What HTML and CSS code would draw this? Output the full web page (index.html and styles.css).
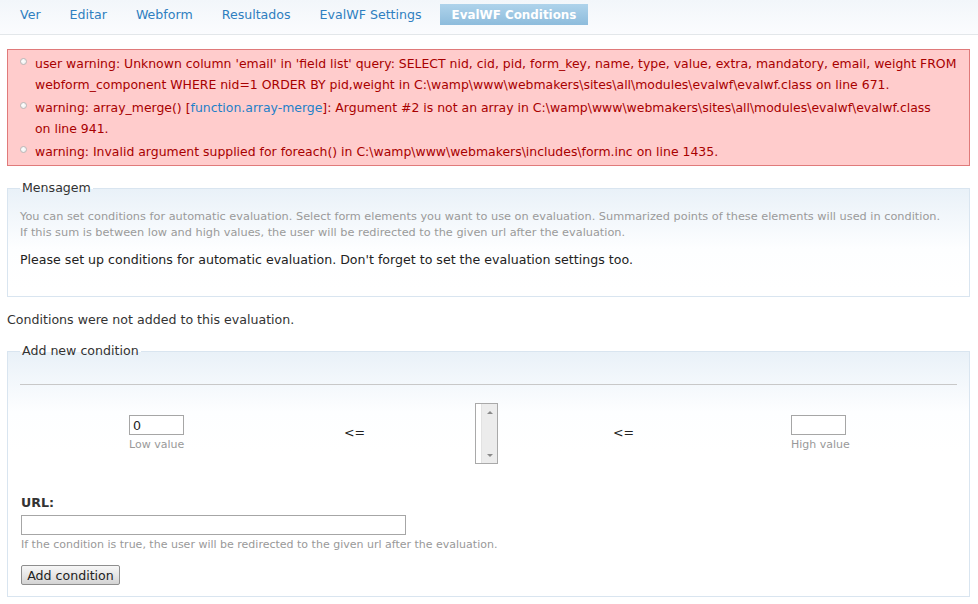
FILE: index.html
```html
<!DOCTYPE html>
<html>
<head>
<meta charset="utf-8">
<link rel="stylesheet" href="styles.css">
</head>
<body>
<div class="tabs">
  <a class="tab" href="#">Ver</a>
  <a class="tab" href="#">Editar</a>
  <a class="tab" href="#">Webform</a>
  <a class="tab" href="#">Resultados</a>
  <a class="tab" href="#">EvalWF Settings</a>
  <a class="tab active" href="#">EvalWF Conditions</a>
</div>
<div class="page">
  <div class="errors">
    <ul>
      <li>user warning: Unknown column 'email' in 'field list' query: SELECT nid, cid, pid, form_key, name, type, value, extra, mandatory, email, weight FROM webform_component WHERE nid=1 ORDER BY pid,weight in C:\wamp\www\webmakers\sites\all\modules\evalwf\evalwf.class on line 671.</li>
      <li>warning: array_merge() [<a href="#">function.array-merge</a>]: Argument #2 is not an array in C:\wamp\www\webmakers\sites\all\modules\evalwf\evalwf.class<br>on line 941.</li>
      <li>warning: Invalid argument supplied for foreach() in C:\wamp\www\webmakers\includes\form.inc on line 1435.</li>
    </ul>
  </div>

  <fieldset class="box msg">
    <legend>Mensagem</legend>
    <div class="desc">You can set conditions for automatic evaluation. Select form elements you want to use on evaluation. Summarized points of these elements will used in condition. If this sum is between low and high values, the user will be redirected to the given url after the evaluation.</div>
    <p class="note">Please set up conditions for automatic evaluation. Don't forget to set the evaluation settings too.</p>
  </fieldset>

  <p class="empty">Conditions were not added to this evaluation.</p>

  <fieldset class="box add">
    <legend>Add new condition</legend>
    <hr class="rule">
    <div class="cond">
      <div class="field">
        <input class="num" type="text" value="0">
        <span class="small">Low value</span>
      </div>
      <div class="op">&lt;=</div>
      <div class="listbox">
        <div class="lb-body"></div>
        <div class="lb-bar">
          <span class="arr up"></span>
          <span class="arr down"></span>
        </div>
      </div>
      <div class="op">&lt;=</div>
      <div class="field">
        <input class="num" type="text" value="">
        <span class="small">High value</span>
      </div>
    </div>
    <div class="url">
      <label class="url-label">URL:</label>
      <input class="url-input" type="text">
      <div class="small">If the condition is true, the user will be redirected to the given url after the evaluation.</div>
      <button class="btn" type="button">Add condition</button>
    </div>
  </fieldset>
</div>
</body>
</html>
```

FILE: styles.css
```css
html, body {
  margin: 0;
  padding: 0;
  background: #fff;
}
body {
  font-family: "DejaVu Sans", Verdana, sans-serif;
  font-size: 12.6px;
  color: #333;
}
.tabs {
  height: 35px;
  box-sizing: border-box;
  padding: 4px 0 0 8px;
  display: flex;
  gap: 5px;
  background: linear-gradient(#f2f6fa, #fbfcfe);
  border-bottom: 1px solid #e3e7ea;
}
.tab {
  display: block;
  height: 21px;
  line-height: 22px;
  padding: 0 12px;
  color: #2f7fc0;
  text-decoration: none;
  font-size: 12.6px;
}
.tab.active {
  background: linear-gradient(#aed3eb, #8ebcdc);
  color: #fff;
  font-weight: bold;
  font-size: 11.9px;
  margin-left: 1px;
}
.page {
  padding: 0 8px 0 7px;
}
.errors {
  margin-top: 14px;
  background: #ffcccc;
  border: 1px solid #e07a7a;
  padding: 3px 6px 3px 0;
  color: #a80000;
  font-size: 12.45px;
}
.errors ul {
  margin: 0;
  padding: 0 0 0 27px;
  list-style: none;
}
.errors li {
  position: relative;
  line-height: 21px;
  margin-bottom: 2px;
}
.errors li:last-child {
  margin-bottom: 0;
}
.errors li::before {
  content: "";
  position: absolute;
  left: -15px;
  top: 5px;
  width: 5px;
  height: 5px;
  border-radius: 50%;
  border: 1px solid #b9b9b9;
  background: radial-gradient(circle at 40% 40%, #fff, #e9e9e9);
}
.errors a {
  color: #1e80c8;
  text-decoration: none;
}
.box {
  margin: 0;
  border: 1px solid #d9e5f0;
  background: linear-gradient(#e9f1f8, #fdfeff 60px, #fff 100px);
  padding: 0 12px;
  min-width: 0;
}
.box legend {
  padding: 0 2px;
  font-size: 12.6px;
  line-height: 16px;
  color: #333;
}
.msg {
  margin-top: 14px;
  padding-top: 13px;
  padding-bottom: 26px;
}
.desc {
  font-size: 11.3px;
  line-height: 16px;
  color: #9a9a9a;
  padding-right: 12px;
}
.note {
  margin: 9px 0 0;
  line-height: 20px;
  color: #222;
}
.empty {
  margin: 14px 0 14px;
  line-height: 18px;
}
.add {
  padding-top: 25px;
  padding-bottom: 11px;
}
.rule {
  margin: 0;
  border: 0;
  border-top: 1px solid #c8c8c8;
  height: 0;
}
.cond {
  margin-top: 15px;
  height: 67px;
  display: grid;
  grid-template-columns: 215px 131px 138px 178px 1fr;
  align-items: center;
  padding-left: 109px;
}
.field {
  display: flex;
  flex-direction: column;
  align-items: flex-start;
}
.num {
  width: 55px;
  height: 20px;
  box-sizing: border-box;
  border: 1px solid #a6a6a6;
  padding: 0 3px;
  font-family: inherit;
  font-size: 12.6px;
  color: #222;
  margin: 0;
}
.small {
  font-size: 11px;
  line-height: 14px;
  color: #999;
  margin-top: 3px;
}
.op {
  color: #222;
  padding-bottom: 2px;
}
.listbox {
  width: 23px;
  height: 61px;
  box-sizing: border-box;
  border: 1px solid #a9a9a9;
  display: flex;
}
.lb-body {
  width: 5px;
  background: #fff;
}
.lb-bar {
  flex: 1;
  background: #ececec;
  border-left: 1px solid #e2e2e2;
  display: flex;
  flex-direction: column;
  justify-content: space-between;
  align-items: center;
  padding: 7px 0 6px;
}
.arr {
  width: 0;
  height: 0;
  border-left: 3px solid transparent;
  border-right: 3px solid transparent;
}
.arr.up {
  border-bottom: 3px solid #8a8a8a;
}
.arr.down {
  border-top: 3px solid #8a8a8a;
}
.url {
  margin-top: 27px;
  padding-left: 1px;
  display: flex;
  flex-direction: column;
  align-items: flex-start;
}
.url-label {
  font-weight: bold;
  line-height: 18px;
  color: #333;
}
.url-input {
  margin: 3px 0 0;
  width: 385px;
  height: 20px;
  box-sizing: border-box;
  border: 1px solid #a6a6a6;
  font-family: inherit;
}
.url .small {
  margin-top: 3px;
}
.btn {
  margin-top: 13px;
  height: 20px;
  width: 99px;
  padding: 0;
  font-family: inherit;
  font-size: 12.6px;
  color: #222;
  border: 1px solid #8e8e8e;
  border-radius: 2px;
  background: linear-gradient(#f7f7f7, #e3e3e3 60%, #d3d3d3);
}
```
